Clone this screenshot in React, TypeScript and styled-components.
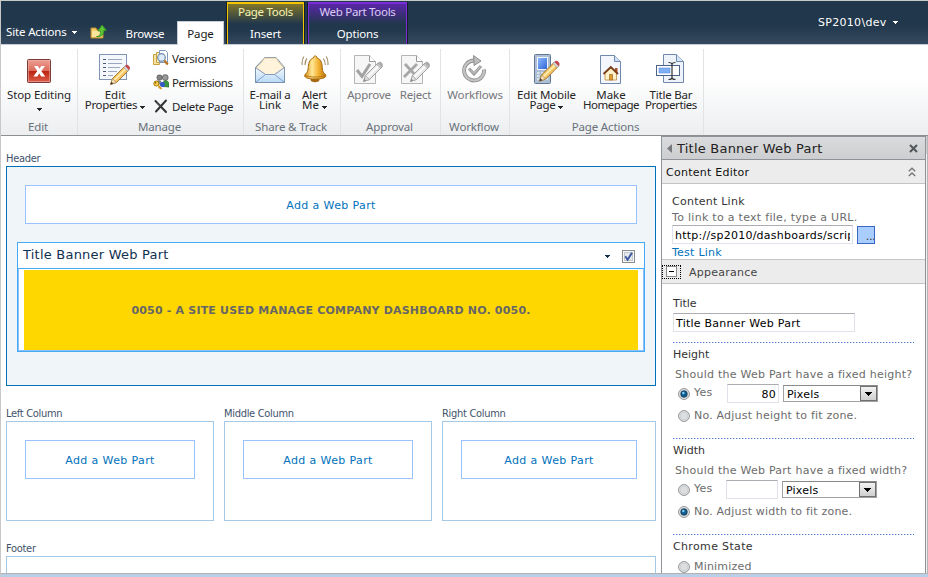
import React from "react";
import styled, { createGlobalStyle, css } from "styled-components";

const Global = createGlobalStyle`
  * { box-sizing: border-box; }
  body { margin: 0; background: #fff; overflow: hidden; }
`;

const ui = `"Noto Sans", "Open Sans", sans-serif`;
const verdana = `"DejaVu Sans", sans-serif`;
const tahoma = `"DejaVu Sans Condensed", "DejaVu Sans", sans-serif`;

const Page = styled.div`
  width: 928px;
  height: 577px;
  display: flex;
  flex-direction: column;
  overflow: hidden;
  background: #fff;
  border-top: 1px solid #c6cbc8;
  border-left: 1px solid #c8c8c8;
  font-family: ${verdana};
  font-size: 11px;
  color: #333;
`;

/* ---------- top bar ---------- */
const TopBar = styled.header`
  flex: 0 0 44px;
  display: flex;
  align-items: flex-end;
  background: linear-gradient(#21374c 0%, #21374c 55%, #35495f 100%);
  border-bottom: 1px solid #c5ccd6;
  color: #fff;
  font-family: ${ui};
  font-size: 12px;
`;
const SiteActions = styled.div`
  width: 84px;
  height: 23px;
  padding-left: 5px;
  display: flex;
  align-items: center;
  gap: 5px;
  line-height: 20px;
  padding-bottom: 1px;
  font-size: 11.5px;
  letter-spacing: -0.15px;
  white-space: nowrap;
`;
const FolderSlot = styled.div`
  width: 26px;
  height: 20px;
  padding-left: 5px;
`;
const Tab = styled.div<{ $w: number; $active?: boolean }>`
  width: ${(p) => p.$w}px;
  height: 23px;
  line-height: 25px;
  padding-left: 2px;
  text-align: center;
  font-size: 11.5px;
  letter-spacing: -0.15px;
  ${(p) =>
    p.$active &&
    css`
      background: #fff;
      color: #1a1a1a;
      border: 1px solid #c5ccd6;
      border-bottom: 0;
      margin-bottom: -1px;
      height: 24px;
      padding-left: 0;
      line-height: 24px;
    `}
`;
const ContextTab = styled.div<{ $w: number; $ml: number; $edge: string; $glow: string; $label: string }>`
  width: ${(p) => p.$w}px;
  height: 42px;
  margin-left: ${(p) => p.$ml}px;
  background: linear-gradient(${(p) => p.$glow} 0%, #21374c 50%, #21374c 65%, #35495f 100%);
  border: 1px solid ${(p) => p.$edge};
  border-top-width: 2px;
  border-bottom: 0;
  box-shadow: -1px 0 #141d28, 1px 0 #141d28;
  text-align: center;
  font-size: 11.5px;
  letter-spacing: -0.15px;
  line-height: 20px;
  white-space: nowrap;
  & > div:first-child {
    color: ${(p) => p.$label};
    height: 20px;
    line-height: 15px;
    letter-spacing: -0.3px;
  }
`;
const User = styled.div`
  margin-left: auto;
  width: 110px;
  height: 43px;
  display: flex;
  align-items: center;
  gap: 6px;
  font-family: ${verdana};
  font-size: 11px;
  letter-spacing: 0.3px;
`;

/* ---------- ribbon ---------- */
const Ribbon = styled.div`
  flex: 0 0 91px;
  display: flex;
  padding-top: 4px;
  background: linear-gradient(#fff 0%, #fff 35%, #eceef0 100%);
  border-bottom: 1px solid #8b9095;
  font-family: ${ui};
  font-size: 11.5px;
  color: #252525;
`;
const Group = styled.section<{ $w: number }>`
  width: ${(p) => p.$w}px;
  display: grid;
  grid-template-rows: 70px 16px;
  border-right: 1px solid #e1e3e5;
`;
const GroupBody = styled.div<{ $pl?: number }>`
  display: flex;
  padding-left: ${(p) => p.$pl ?? 0}px;
`;
const GroupName = styled.div`
  text-align: center;
  line-height: 16px;
  padding-right: 2px;
  color: #68707a;
  letter-spacing: -0.15px;
`;
const BigButton = styled.div<{ $w: number; $off?: boolean }>`
  width: ${(p) => p.$w}px;
  flex: none;
  display: flex;
  flex-direction: column;
  align-items: center;
  padding-top: 4px;
  color: ${(p) => (p.$off ? "#75777a" : "#252525")};
  white-space: nowrap;
  svg.art { height: 34px; margin-bottom: 3px; flex: none; }
`;
const Caption = styled.div<{ $ls?: number }>`
  height: 10px;
  line-height: 10px;
  display: flex;
  align-items: center;
  gap: 3px;
  letter-spacing: ${(p) => p.$ls ?? 0}px;
  & > svg { margin-top: 4px; }
`;
const ArrowRow = styled.div`
  padding-top: 8px;
  display: flex;
`;
const SmallList = styled.div`
  display: flex;
  flex-direction: column;
  margin-top: -3px;
  margin-left: 4px;
`;
const SmallButton = styled.div<{ $ls?: number }>`
  height: 24px;
  display: flex;
  align-items: center;
  gap: 3px;
  letter-spacing: ${(p) => p.$ls ?? -0.2}px;
  white-space: nowrap;
`;

const Down = ({ color = "#252525" }: { color?: string }) => (
  <svg width="5" height="3" viewBox="0 0 5 3" shapeRendering="crispEdges">
    <path d="M0 0h5v1H4v1H3v1H2V2H1V1H0z" fill={color} />
  </svg>
);

/* ---------- workspace ---------- */
const Work = styled.main`
  flex: 0 0 437px;
  display: flex;
  overflow: hidden;
`;
const Canvas = styled.div`
  width: 660px;
  padding: 14px 5px 0;
`;
const ZoneName = styled.div`
  height: 16px;
  line-height: 18px;
  font-family: ${tahoma};
  font-size: 11px;
  letter-spacing: -0.3px;
  color: #42526b;
`;
const HeaderZone = styled.div`
  height: 220px;
  border: 1px solid #0072bc;
  background: #f0f5fa;
  padding: 18px 10px 0;
`;
const AddBox = styled.div<{ $m?: string }>`
  height: 39px;
  margin: ${(p) => p.$m ?? "0"};
  border: 1px solid #99c2ff;
  background: #fff;
  line-height: 40px;
  text-align: center;
  color: #0072bc;
  letter-spacing: 0.37px;
`;
const WebPart = styled.div`
  height: 110px;
  border: 1px solid #44aaf6;
  background: #fff;
`;
const WebPartBar = styled.div`
  height: 26px;
  display: flex;
  align-items: center;
  padding: 0 9px 0 5px;
  font-size: 13px;
  letter-spacing: 0.22px;
  line-height: 24px;
  color: #10304f;
  & > :nth-child(2) { margin-left: auto; margin-right: 12px; }
`;
const WebPartName = styled.span`
  padding-bottom: 2px;
`;
const WebPartBody = styled.div`
  height: 83px;
  border: 1px solid #8cc0fb;
  border-top: 1px solid #44aaf6;
  padding: 1px 5px 0;
  margin: -1px 0 0;
`;
const Banner = styled.div`
  height: 80px;
  background: #ffd700;
  color: #666;
  font-weight: bold;
  font-size: 11px;
  letter-spacing: 0.19px;
  line-height: 82px;
  text-align: center;
`;
const Columns = styled.div`
  display: grid;
  grid-template-columns: 208px 208px 214px;
  gap: 10px;
  padding-top: 19px;
`;
const Zone = styled.div`
  height: 100px;
  border: 1px solid #a5cae8;
  padding: 18px;
`;
const FooterArea = styled.div`
  padding-top: 19px;
`;

/* ---------- tool pane ---------- */
const Pane = styled.aside`
  width: 265px;
  border: 1px solid #8e9299;
  border-bottom: 0;
`;
const PaneTitle = styled.div`
  height: 23px;
  display: flex;
  align-items: center;
  gap: 5px;
  padding: 0 7px 0 5px;
  background: linear-gradient(#dadbdc, #cdced0);
  border-bottom: 1px solid #8e9299;
  font-size: 13px;
  letter-spacing: 0.22px;
  color: #222;
  & > svg:last-child { margin-left: auto; }
`;
const Section = styled.div<{ $inset?: boolean }>`
  height: ${(p) => (p.$inset ? 25 : 24)}px;
  display: flex;
  align-items: center;
  background: #ececec;
  border-bottom: 1px solid #c4c4c4;
  ${(p) => (p.$inset ? "border-top: 1px solid #c4c4c4;" : "padding-left: 4px;")}
  padding-right: 9px;
  font-size: 11px;
  letter-spacing: 0.25px;
  color: ${(p) => (p.$inset ? "#444" : "#111")};
  & > svg:last-child { margin-left: auto; }
`;
const SectionName = styled.span`
  padding-top: 1px;
`;
const Expander = styled.span`
  width: 19px;
  height: 14px;
  margin-right: 8px;
  border: 1px dotted #000;
  display: flex;
  align-items: center;
  padding-left: 3px;
`;
const LinkForm = styled.div`
  height: 75px;
  padding: 9px 0 0 10px;
`;
const Text = styled.div<{ $h?: number; $c?: string; $ls?: number; $pl?: number }>`
  height: ${(p) => p.$h ?? 16}px;
  line-height: ${(p) => (p.$h ?? 16) + 2}px;
  color: ${(p) => p.$c ?? "#333"};
  letter-spacing: ${(p) => p.$ls ?? 0.25}px;
  padding-left: ${(p) => p.$pl ?? 0}px;
  white-space: nowrap;
`;
const Row = styled.div`
  display: flex;
  align-items: center;
`;
const Field = styled.div<{ $w: number; $right?: boolean }>`
  width: ${(p) => p.$w}px;
  height: 19px;
  line-height: 19px;
  padding: 0 2px;
  border: 1px solid #dfe2ea;
  border-top-color: #abadb3;
  background: #fff;
  color: #000;
  letter-spacing: 0.25px;
  overflow: hidden;
  white-space: nowrap;
  text-align: ${(p) => (p.$right ? "right" : "left")};
`;
const FieldClip = styled.div`
  overflow: hidden;
  height: 17px;
`;
const Browse = styled.div`
  width: 18px;
  height: 18px;
  margin: 1px 0 0 4px;
  padding-left: 8px;
  border: 1px solid #3a66c4;
  background: #a9cdff;
  color: #222;
  font-size: 10px;
  line-height: 20px;
  overflow: hidden;
`;
const Props = styled.div`
  padding: 9px 11px 0;
`;
const Block = styled.div<{ $h: number }>`
  height: ${(p) => p.$h}px;
`;
const Rule = styled.div`
  height: 1px;
  background: repeating-linear-gradient(90deg, #4a77c8 0 1px, #c3d2ee 1px 2px, #fff 2px 3px);
`;
const Option = styled.div<{ $h: number }>`
  height: ${(p) => p.$h}px;
  padding-left: 5px;
  display: flex;
  align-items: center;
  color: #6c6c6c;
  letter-spacing: 0.2px;
  white-space: nowrap;
`;
const OptionText = styled.span<{ $w?: number }>`
  width: ${(p) => (p.$w ? p.$w + "px" : "auto")};
  margin-left: 4px;
  padding-bottom: 2px;
`;
const Select = styled.div`
  width: 95px;
  height: 17px;
  margin-left: 4px;
  border: 1px solid #a0a0a0;
  border-top-color: #8a8a8a;
  display: flex;
  justify-content: space-between;
  padding-left: 3px;
  line-height: 17px;
  background: #fff;
  color: #000;
  letter-spacing: 0.2px;
`;
const SelectArrow = styled.span`
  width: 17px;
  height: 15px;
  border: 1px solid #707070;
  background: linear-gradient(#f2f2f2, #cfcfcf);
  display: flex;
  align-items: center;
  justify-content: center;
`;
const Edge = styled.div`
  width: 2px;
  background: linear-gradient(#d0d0d0 0 18px, #f0f0f0 18px);
  border-right: 1px solid #b5b5b5;
`;
const StatusLine = styled.div`
  flex: 1;
  margin-left: -1px;
  background: #b9cfe8;
  border-top: 1px solid #b2b2b2;
`;

const Radio = ({ on }: { on?: boolean }) => (
  <svg width="12" height="12" viewBox="0 0 12 12">
    <circle cx="6" cy="6" r="5.4" fill="#f4f4f4" stroke="#8a8d90" />
    <circle cx="6" cy="6" r="4" fill={on ? "#c9d6e0" : "#dcdee0"} stroke="#c2c5c8" strokeWidth=".7" />
    {on && (
      <>
        <circle cx="6" cy="6" r="3.2" fill="#0f5f93" stroke="#12344f" strokeWidth=".8" />
        <circle cx="5.3" cy="5" r="1.2" fill="#7fd0f3" />
      </>
    )}
  </svg>
);

/* ---------- artwork ---------- */
const FolderUp = () => (
  <svg width="17" height="15" viewBox="0 0 17 15">
    <path d="M1 4h5l1 2h6v8H1z" fill="#f1cf6b" stroke="#b98c2b" />
    <path d="M2 7h10v6H2z" fill="#fbe59d" />
    <path d="M6.500 12.500c3 0 4-1.500 4-5.500H7.800L12 1l4.500 5.500h-2.600c0 4-2 6.500-7.400 6z" fill="#5cc437" stroke="#2c8a1c" strokeWidth=".8" />
  </svg>
);
const StopIcon = () => (
  <svg className="art" width="26" height="34" viewBox="0 0 26 34">
    <defs>
      <linearGradient id="stop" x2="0" y2="1">
        <stop offset="0" stopColor="#eda096" />
        <stop offset=".48" stopColor="#dc6b5b" />
        <stop offset=".52" stopColor="#bd2413" />
        <stop offset="1" stopColor="#dc5f4b" />
      </linearGradient>
    </defs>
    <rect x="1.500" y="6.500" width="23" height="23" rx="1" fill="url(#stop)" stroke="#7a3a35" />
    <rect x="2.500" y="7.500" width="21" height="21" fill="none" stroke="#eeb2aa" strokeOpacity=".6" />
    <path d="M8 13h3.800l1.700 2.700L15.300 13H19l-3.700 5 3.900 5.500h-4l-1.900-3-2 3H7.400l3.900-5.500z" fill="#fff" />
  </svg>
);
const Pencil = ({ gray }: { gray?: boolean }) => (
  <g>
    <path d="M0 21l2-6L14.500 2.500l4 4L6 19z" fill={gray ? "#e9e9e9" : "#f6c667"} stroke={gray ? "#999" : "#9c6a1f"} strokeWidth=".9" />
    <path d="M3.500 17L16 4.500" stroke={gray ? "#fff" : "#fff0b8"} strokeWidth="1.500" />
    <path d="M13.200 3.800l1.800-1.800 4 4-1.800 1.800z" fill={gray ? "#c4c4c4" : "#d5dbe2"} stroke="#8a929b" strokeWidth=".6" />
    <path d="M15.300 1.700c1.500-1.500 5.200 1.800 3.900 3.900l-.8.8-3.900-3.900z" fill={gray ? "#aaa" : "#c4454b"} />
    <path d="M0 21l2-6 4 4z" fill={gray ? "#ddd" : "#f3dcb4"} stroke={gray ? "#999" : "#9c7a49"} strokeWidth=".6" />
    <path d="M0 21l.9-2.700 1.800 1.800z" fill={gray ? "#888" : "#333"} />
  </g>
);
const EditPropsIcon = () => (
  <svg className="art" width="34" height="34" viewBox="0 0 34 34">
    <rect x="1.500" y="1.500" width="27" height="25" fill="#f4f8fd" stroke="#8096b3" />
    {[6, 10, 14, 18, 22].map((y, i) => (
      <g key={y}>
        <path d={`M5 ${y + 0.5}h3`} stroke="#4a5b7a" />
        <path d={`M10 ${y + 0.5}h${[14, 14, 12, 9, 5][i]}`} stroke="#9aa9bf" />
      </g>
    ))}
    <g transform="translate(12.500 10.500)"><Pencil /></g>
  </svg>
);
const VersionsIcon = () => (
  <svg width="16" height="16" viewBox="0 0 16 16">
    <path d="M.5 4.500h6v10h-6z" fill="#f9e3a0" stroke="#caa042" />
    <path d="M3.500 2.500h6v10h-6z" fill="#fbeec0" stroke="#caa042" />
    <path d="M6.500.5h6l2 2v10h-8z" fill="#fff" stroke="#7f99c0" />
    <circle cx="8.500" cy="7.500" r="3.800" fill="#d8eafa" fillOpacity=".9" stroke="#6f87a6" strokeWidth="1.200" />
    <path d="M11.300 10.500l3.500 4" stroke="#b5711f" strokeWidth="2.200" />
  </svg>
);
const PermissionsIcon = () => (
  <svg width="16" height="16" viewBox="0 0 16 16">
    <rect x="4" y="1" width="5" height="5" rx="2" fill="#858585" stroke="#4d4d4d" strokeWidth=".7" />
    <rect x="9.500" y=".8" width="5.500" height="5.500" rx="2" fill="#9a9a9a" stroke="#4d4d4d" strokeWidth=".7" />
    <path d="M2.500 10c0-4.500 6-4.500 7 0z" fill="#8a8f94" stroke="#4d4d4d" strokeWidth=".5" />
    <path d="M9 12.500c-.5-7 7-7.500 7-2v2.500z" fill="#3d9a3a" stroke="#1f5f22" strokeWidth=".6" />
    <circle cx="9.500" cy="10.500" r="2.500" fill="#3558c8" />
    <circle cx="3.300" cy="9.500" r="2.500" fill="#ffd451" stroke="#a67606" />
    <circle cx="2.600" cy="8.900" r=".8" fill="#7a5600" />
    <path d="M5 11l3.500 4M7 12.800l-1.300 1.500" stroke="#d09a12" strokeWidth="1.700" />
  </svg>
);
const DeleteIcon = () => (
  <svg width="16" height="16" viewBox="0 0 16 16">
    <path d="M2.500 3l10.500 11M13 2.500L3 13.500" stroke="#333" strokeWidth="2" strokeLinecap="round" />
    <path d="M3.500 4l4 4.500" stroke="#777" strokeWidth=".6" />
  </svg>
);
const MailIcon = () => (
  <svg className="art" width="32" height="34" viewBox="0 0 32 34">
    <defs>
      <linearGradient id="mail" x2="0" y2="1"><stop offset="0" stopColor="#f3f9ff" /><stop offset="1" stopColor="#b9d9f6" /></linearGradient>
    </defs>
    <path d="M1.500 14.500L9 6.500c.7-1.200 1.500-2 3-2h9c1 0 2 .8 2.800 2l6.700 8v15h-29z" fill="#fbe9c9" stroke="#7890ae" />
    <path d="M2 15l6-6c1-2 2-4 4-4h8.500c2 0 3 2 4 4l5.500 6-10 7h-8z" fill="#fff3dc" stroke="#d9bf8f" strokeWidth=".7" />
    <path d="M1.500 14.500l10 7h9l10-7v15h-29z" fill="url(#mail)" stroke="#7890ae" strokeWidth=".9" />
    <path d="M2 29l9.500-7.500M30 29l-9.500-7.500" stroke="#7ba1cb" />
  </svg>
);
const BellIcon = () => (
  <svg className="art" width="28" height="34" viewBox="0 0 28 34">
    <defs>
      <linearGradient id="bell" x2="1" y2="0">
        <stop offset="0" stopColor="#d38a12" /><stop offset=".35" stopColor="#ffe897" /><stop offset=".65" stopColor="#f3b232" /><stop offset="1" stopColor="#bd720b" />
      </linearGradient>
    </defs>
    <ellipse cx="14" cy="26.500" rx="4.500" ry="2.800" fill="#a76a12" />
    <path d="M4 21.500c3.500-2.500 3-6 3.500-9.500.5-4.500 3-6.500 5-7 0-2.800 3.500-2.800 3.500 0 2 .5 4.500 2.500 5 7 .5 4 0 7 3.500 9.500 1.500 3-2 4.500-10.500 4.500s-11.500-2-10-4.500z" fill="url(#bell)" stroke="#a4680c" />
    <path d="M4.500 22.500c4 2 15 2 19.500 0" fill="none" stroke="#b87714" />
    <path d="M6 5.500C4.500 7 4 9 4 12M3 3.500C1.200 6 .8 8.500 1.200 12M22.300 5.500c1.500 2 2 4 2 6.500M25.200 3.500c1.700 2.500 2.100 5 1.700 8.500" fill="none" stroke="#a08a62" strokeWidth="1.100" />
  </svg>
);
const ReviewIcon = ({ reject }: { reject?: boolean }) => (
  <svg className="art" width="32" height="34" viewBox="0 0 32 34">
    <path d="M1.500 2.500h15l6 6v22h-21z" fill="#f6f6f6" stroke="#b5b5b5" />
    <path d="M16.500 2.500v6h6" fill="#fff" stroke="#999" />
    {reject ? (
      <path d="M5 11l12 13M17 11L4 24" stroke="#a6a6a6" strokeWidth="2.800" />
    ) : (
      <path d="M4 17l5 6.500L17 11" fill="none" stroke="#a2a2a2" strokeWidth="3" />
    )}
    <g transform="translate(10.500 7.500)"><Pencil gray /></g>
  </svg>
);
const WorkflowIcon = () => (
  <svg className="art" width="28" height="34" viewBox="0 0 28 34">
    <path d="M13 7.500a10 10 0 1 0 10 9" fill="none" stroke="#8c8c8c" strokeWidth="3.800" />
    <path d="M13 7.500a10 10 0 1 0 10 9" fill="none" stroke="#c3c3c3" strokeWidth="2.200" />
    <path d="M12.500 2.500l7.500 5.500-7 4.500v-3.500z" fill="#bdbdbd" stroke="#8c8c8c" />
    <path d="M8 15.500l5 5.500 7-8" fill="none" stroke="#9b9b9b" strokeWidth="3" />
    <path d="M8.500 16l4.500 4.500 6.500-7.300" fill="none" stroke="#ccc" strokeWidth="1" />
  </svg>
);
const MobileIcon = () => (
  <svg className="art" width="30" height="34" viewBox="0 0 30 34">
    <defs><linearGradient id="scr" x2="1" y2="1"><stop offset="0" stopColor="#8fbcff" /><stop offset="1" stopColor="#2c62d6" /></linearGradient></defs>
    <rect x="2.500" y="1.500" width="16" height="29" rx="1" fill="#aebfd4" stroke="#5f7697" />
    <rect x="5.500" y="4.500" width="10" height="12" fill="url(#scr)" stroke="#eef5ff" />
    {[20, 23, 26].map((y) => <path key={y} d={`M5 ${y}h2.500M9.200 ${y}h2.500M13.500 ${y}h2.500`} stroke="#e6eef8" strokeWidth="1.600" />)}
    <g transform="translate(7.500 6.500) scale(1.030)"><Pencil /></g>
  </svg>
);
const HomeIcon = () => (
  <svg className="art" width="24" height="34" viewBox="0 0 24 34">
    <path d="M1.500 2.500h14l6 6v22h-20z" fill="#f3f7fd" stroke="#7188ad" />
    <path d="M15.500 2.500v6h6" fill="#cfe0f5" stroke="#7188ad" />
    <path d="M16 15h2.500v5H16z" fill="#a5522a" />
    <path d="M6 20l6-5 5.500 5v7H6z" fill="#fff1c9" stroke="#b98d42" strokeWidth=".8" />
    <path d="M4.500 21l7.300-7 7.200 7" fill="none" stroke="#7a3d1b" strokeWidth="1.800" />
    <path d="M10.500 21.500h3V27h-3z" fill="#e09c2d" stroke="#8b5a15" strokeWidth=".6" />
  </svg>
);
const TitleBarIcon = () => (
  <svg className="art" width="32" height="34" viewBox="0 0 32 34">
    <path d="M8.500 1.500h13l7 7v21h-20z" fill="#eef3fa" stroke="#7188ad" />
    <path d="M21.500 1.500v7h7" fill="#d5e4f7" stroke="#7188ad" />
    <rect x="1.500" y="12.500" width="23" height="10" fill="#fff" stroke="#4c6286" />
    <rect x="4" y="15" width="11" height="5" fill="#7fb0f5" stroke="#5d8fe0" strokeWidth=".6" />
    <path d="M13.500 9.500c2 0 3.500.5 3.500 2v13c0 1.500-1.500 2-3.500 2M20.500 9.500c-2 0-3.500.5-3.500 2v13c0 1.500 1.500 2 3.500 2" fill="none" stroke="#333" strokeWidth="1.200" />
  </svg>
);
const CheckBox = () => (
  <svg width="13" height="13" viewBox="0 0 13 13">
    <rect x=".5" y=".5" width="12" height="12" fill="#f7f7f7" stroke="#8a8d90" />
    <rect x="2.500" y="2.500" width="8" height="8" fill="#e5e8ec" stroke="#c4c8cd" />
    <path d="M3.300 6.300l2.300 3.400 4.400-7" fill="none" stroke="#3b56a0" strokeWidth="1.900" />
  </svg>
);
const SelectCaret = () => (
  <svg width="7" height="4" viewBox="0 0 7 4" shapeRendering="crispEdges">
    <path d="M0 0h7L3.500 4z" />
  </svg>
);

export default function App() {
  return (
    <>
      <Global />
      <Page>
        <TopBar>
          <SiteActions>Site Actions <Down color="#fff" /></SiteActions>
          <FolderSlot><FolderUp /></FolderSlot>
          <Tab $w={66}>Browse</Tab>
          <Tab $w={47} $active>Page</Tab>
          <ContextTab $w={77} $ml={3} $edge="#f2c500" $glow="#80762a" $label="#f6f3b4">
            <div>Page Tools</div><div>Insert</div>
          </ContextTab>
          <ContextTab $w={99} $ml={4} $edge="#7a2fd6" $glow="#5a26a8" $label="#dccbf5">
            <div>Web Part Tools</div><div>Options</div>
          </ContextTab>
          <User>SP2010\dev <Down color="#fff" /></User>
        </TopBar>

        <Ribbon>
          <Group $w={77}>
            <GroupBody>
              <BigButton $w={76}><StopIcon /><Caption $ls={-0.1}>Stop Editing</Caption><ArrowRow><Down /></ArrowRow></BigButton>
            </GroupBody>
            <GroupName>Edit</GroupName>
          </Group>
          <Group $w={166}>
            <GroupBody $pl={3}>
              <BigButton $w={68}><EditPropsIcon /><Caption>Edit</Caption><Caption $ls={-0.35}>Properties <Down /></Caption></BigButton>
              <SmallList>
                <SmallButton><VersionsIcon />Versions</SmallButton>
                <SmallButton $ls={-0.45}><PermissionsIcon />Permissions</SmallButton>
                <SmallButton $ls={-0.35}><DeleteIcon />Delete Page</SmallButton>
              </SmallList>
            </GroupBody>
            <GroupName>Manage</GroupName>
          </Group>
          <Group $w={97}>
            <GroupBody $pl={3}>
              <BigButton $w={46}><MailIcon /><Caption $ls={-0.2}>E-mail a</Caption><Caption>Link</Caption></BigButton>
              <BigButton $w={43}><BellIcon /><Caption $ls={-0.15}>Alert</Caption><Caption>Me <Down /></Caption></BigButton>
            </GroupBody>
            <GroupName>Share &amp; Track</GroupName>
          </Group>
          <Group $w={100}>
            <GroupBody $pl={3}>
              <BigButton $w={50} $off><ReviewIcon /><Caption $ls={-0.2}>Approve</Caption></BigButton>
              <BigButton $w={43} $off><ReviewIcon reject /><Caption $ls={-0.2}>Reject</Caption></BigButton>
            </GroupBody>
            <GroupName>Approval</GroupName>
          </Group>
          <Group $w={69}>
            <GroupBody>
              <BigButton $w={68} $off><WorkflowIcon /><Caption $ls={-0.1}>Workflows</Caption></BigButton>
            </GroupBody>
            <GroupName>Workflow</GroupName>
          </Group>
          <Group $w={194}>
            <GroupBody $pl={4}>
              <BigButton $w={65}><MobileIcon /><Caption $ls={-0.15}>Edit Mobile</Caption><Caption $ls={-0.3}>Page <Down /></Caption></BigButton>
              <BigButton $w={64}><HomeIcon /><Caption>Make</Caption><Caption $ls={-0.45}>Homepage</Caption></BigButton>
              <BigButton $w={56}><TitleBarIcon /><Caption $ls={-0.2}>Title Bar</Caption><Caption $ls={-0.4}>Properties</Caption></BigButton>
            </GroupBody>
            <GroupName>Page Actions</GroupName>
          </Group>
        </Ribbon>

        <Work>
          <Canvas>
            <ZoneName>Header</ZoneName>
            <HeaderZone>
              <AddBox $m="0 8px 18px">Add a Web Part</AddBox>
              <WebPart>
                <WebPartBar>
                  <WebPartName>Title Banner Web Part</WebPartName>
                  <Down color="#10304f" />
                  <CheckBox />
                </WebPartBar>
                <WebPartBody><Banner>0050 - A SITE USED MANAGE COMPANY DASHBOARD NO. 0050.</Banner></WebPartBody>
              </WebPart>
            </HeaderZone>
            <Columns>
              {["Left Column", "Middle Column", "Right Column"].map((name) => (
                <div key={name}>
                  <ZoneName>{name}</ZoneName>
                  <Zone><AddBox>Add a Web Part</AddBox></Zone>
                </div>
              ))}
            </Columns>
            <FooterArea>
              <ZoneName>Footer</ZoneName>
              <Zone />
            </FooterArea>
          </Canvas>

          <Pane>
            <PaneTitle>
              <svg width="5" height="9" viewBox="0 0 5 9"><path d="M5 0v9L0 4.500z" fill="#77797c" /></svg>
              Title Banner Web Part
              <svg width="9" height="9" viewBox="0 0 9 9"><path d="M1 1l7 7M8 1L1 8" stroke="#54575a" strokeWidth="2.100" /></svg>
            </PaneTitle>
            <Section>
              <SectionName>Content Editor</SectionName>
              <svg width="8" height="10" viewBox="0 0 8 10"><path d="M.8 4.200L4 1.200l3.200 3M.8 9L4 6l3.200 3" fill="none" stroke="#777" strokeWidth="1.400" /></svg>
            </Section>
            <LinkForm>
              <Text>Content Link</Text>
              <Text $c="#6c6c6c" $ls={0.29}>To link to a text file, type a URL.</Text>
              <Row>
                <Field $w={181}><FieldClip>http://sp2010/dashboards/scripts</FieldClip></Field>
                <Browse>...</Browse>
              </Row>
              <Text $c="#0072bc">Test Link</Text>
            </LinkForm>
            <Section $inset>
              <Expander>
                <svg width="11" height="11" viewBox="0 0 11 11"><rect x=".5" y=".5" width="10" height="10" fill="#fff" stroke="#8a8a8a" /><path d="M3 5.500h5" stroke="#000" /></svg>
              </Expander>
              <SectionName>Appearance</SectionName>
            </Section>
            <Props>
              <Block $h={49}>
                <Text $h={20} $ls={0}>Title</Text>
                <Field $w={182}>Title Banner Web Part</Field>
              </Block>
              <Rule />
              <Block $h={95}>
                <Text $h={22} $ls={0}>Height</Text>
                <Text $h={18} $pl={2} $c="#6c6c6c">Should the Web Part have a fixed height?</Text>
                <Option $h={21}>
                  <Radio on /><OptionText $w={33}>Yes</OptionText>
                  <Field $w={52} $right>80</Field>
                  <Select>Pixels<SelectArrow><SelectCaret /></SelectArrow></Select>
                </Option>
                <Option $h={24}><Radio /><OptionText>No. Adjust height to fit zone.</OptionText></Option>
              </Block>
              <Rule />
              <Block $h={95}>
                <Text $h={22} $ls={0}>Width</Text>
                <Text $h={18} $pl={2} $c="#6c6c6c">Should the Web Part have a fixed width?</Text>
                <Option $h={21}>
                  <Radio /><OptionText $w={32}>Yes</OptionText>
                  <Field $w={52} $right />
                  <Select>Pixels<SelectArrow><SelectCaret /></SelectArrow></Select>
                </Option>
                <Option $h={24}><Radio on /><OptionText>No. Adjust width to fit zone.</OptionText></Option>
              </Block>
              <Rule />
              <Text $h={22} $ls={0.35}>Chrome State</Text>
              <Option $h={20}><Radio /><OptionText>Minimized</OptionText></Option>
            </Props>
          </Pane>
          <Edge />
        </Work>
        <StatusLine />
      </Page>
    </>
  );
}
